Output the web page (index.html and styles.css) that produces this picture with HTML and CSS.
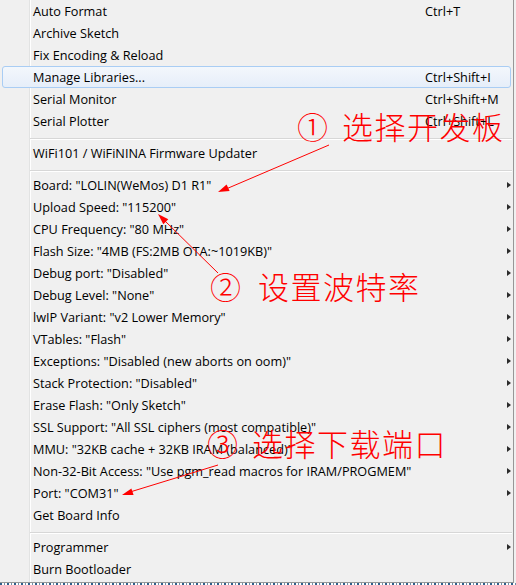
FILE: index.html
```html
<!DOCTYPE html>
<html>
<head>
<meta charset="utf-8">
<link rel="stylesheet" href="styles.css">
</head>
<body>
<div class="screen">
  <div class="menu">
    <div class="item"><span class="label">Auto Format</span><span class="key">Ctrl+T</span><span></span></div>
    <div class="item"><span class="label">Archive Sketch</span><span></span><span></span></div>
    <div class="item"><span class="label">Fix Encoding &amp; Reload</span><span></span><span></span></div>
    <div class="item hl"><span class="label">Manage Libraries...</span><span class="key">Ctrl+Shift+I</span><span></span></div>
    <div class="item"><span class="label">Serial Monitor</span><span class="key">Ctrl+Shift+M</span><span></span></div>
    <div class="item"><span class="label">Serial Plotter</span><span class="key">Ctrl+Shift+L</span><span></span></div>
    <div class="sep"></div>
    <div class="item"><span class="label">WiFi101 / WiFiNINA Firmware Updater</span><span></span><span></span></div>
    <div class="sep"></div>
    <div class="item"><span class="label">Board: "LOLIN(WeMos) D1 R1"</span><span></span><span class="sub"></span></div>
    <div class="item"><span class="label">Upload Speed: "115200"</span><span></span><span class="sub"></span></div>
    <div class="item"><span class="label">CPU Frequency: "80 MHz"</span><span></span><span class="sub"></span></div>
    <div class="item"><span class="label">Flash Size: "4MB (FS:2MB OTA:~1019KB)"</span><span></span><span class="sub"></span></div>
    <div class="item"><span class="label">Debug port: "Disabled"</span><span></span><span class="sub"></span></div>
    <div class="item"><span class="label">Debug Level: "None"</span><span></span><span class="sub"></span></div>
    <div class="item"><span class="label">lwIP Variant: "v2 Lower Memory"</span><span></span><span class="sub"></span></div>
    <div class="item"><span class="label">VTables: "Flash"</span><span></span><span class="sub"></span></div>
    <div class="item"><span class="label">Exceptions: "Disabled (new aborts on oom)"</span><span></span><span class="sub"></span></div>
    <div class="item"><span class="label">Stack Protection: "Disabled"</span><span></span><span class="sub"></span></div>
    <div class="item"><span class="label">Erase Flash: "Only Sketch"</span><span></span><span class="sub"></span></div>
    <div class="item"><span class="label">SSL Support: "All SSL ciphers (most compatible)"</span><span></span><span class="sub"></span></div>
    <div class="item"><span class="label">MMU: "32KB cache + 32KB IRAM (balanced)"</span><span></span><span class="sub"></span></div>
    <div class="item"><span class="label">Non-32-Bit Access: "Use pgm_read macros for IRAM/PROGMEM"</span><span></span><span class="sub"></span></div>
    <div class="item"><span class="label">Port: "COM31"</span><span></span><span class="sub"></span></div>
    <div class="item"><span class="label">Get Board Info</span><span></span><span></span></div>
    <div class="sep"></div>
    <div class="item"><span class="label">Programmer</span><span></span><span class="sub"></span></div>
    <div class="item"><span class="label">Burn Bootloader</span><span></span><span></span></div>
  </div>
  <div class="taskbar"></div>

  <svg class="arrows" width="516" height="585" viewBox="0 0 516 585">
    <line x1="329" y1="145" x2="226" y2="189" stroke="#ff0000" stroke-width="1"/>
    <polygon points="218,192 229.6,191 226.6,184.5" fill="#ff0000"/>
    <line x1="218" y1="273" x2="164" y2="220" stroke="#ff0000" stroke-width="1"/>
    <polygon points="158,214 168.3,219.2 163.3,224.2" fill="#ff0000"/>
    <line x1="218" y1="465" x2="130" y2="492" stroke="#ff0000" stroke-width="1"/>
    <polygon points="122,495 133.6,495 131.4,488.4" fill="#ff0000"/>
  </svg>

  <div class="note note1"><span class="num">①</span><span class="txt">选择开发板</span></div>
  <div class="note note2"><span class="num">②</span><span class="txt">设置波特率</span></div>
  <div class="note note3"><span class="num">③</span><span class="txt">选择下载端口</span></div>
</div>
</body>
</html>
```

FILE: styles.css
```css
html, body {
  margin: 0;
  padding: 0;
  background: #f0f0f0;
}

.screen {
  position: relative;
  width: 516px;
  height: 585px;
  overflow: hidden;
  background: #f0f0f0;
  font-family: "Open Sans", "Noto Sans", sans-serif;
  font-size: 12.7px;
  color: #000;
}

.menu {
  width: 513px;
  height: 582px;
  border-right: 1px solid #979797;
  border-bottom: 1px solid #979797;
  box-sizing: content-box;
  background-color: #f0f0f0;
  background-image: linear-gradient(to right,
    transparent 29px, #e2e3e3 29px, #e2e3e3 30px,
    #ffffff 30px, #ffffff 31px, transparent 31px);
  display: flex;
  flex-direction: column;
}

.item {
  height: 22px;
  box-sizing: border-box;
  display: grid;
  grid-template-columns: 392px 1fr 4px;
  align-items: center;
  padding: 0 2px 0 33px;
  white-space: nowrap;
  line-height: 22px;
}

.item.hl {
  margin: 0 2px;
  padding: 0 1px 0 30px;
  border: 1px solid #a9cdf4;
  border-radius: 3px;
  background: linear-gradient(#f3f7fc, #e6eef9);
  line-height: 20px;
}

.label {
  overflow: visible;
}

.key {
  color: #000;
}

.sub {
  width: 0;
  height: 0;
  border-top: 3.5px solid transparent;
  border-bottom: 3.5px solid transparent;
  border-left: 4px solid #2b2b2b;
  justify-self: start;
}

.sep {
  height: 10px;
  box-sizing: border-box;
  padding-top: 6px;
  margin-left: 30px;
  margin-right: 1px;
}

.sep::before {
  content: "";
  display: block;
  height: 1px;
  background: #d7d7d7;
  border-bottom: 1px solid #ffffff;
}

.taskbar {
  height: 2px;
  background: repeating-linear-gradient(to right,
    #2f5f8a 0, #2f5f8a 2px, #ffffff 2px, #ffffff 4px,
    #6e8ea8 4px, #6e8ea8 5px, #ffffff 5px, #ffffff 7px);
}

.arrows {
  position: absolute;
  left: 0;
  top: 0;
  pointer-events: none;
}

.note {
  position: absolute;
  display: flex;
  align-items: center;
  gap: 14px;
  font-family: "Noto Sans CJK SC", sans-serif;
  font-weight: 300;
  font-size: 31px;
  line-height: 31px;
  color: #ff0000;
  white-space: nowrap;
}

.note .txt {
  letter-spacing: 1.5px;
}

.note1 { left: 297px; top: 110px; }
.note2 { left: 210px; top: 270px; gap: 17px; }
.note3 { left: 207px; top: 427px; }
```
